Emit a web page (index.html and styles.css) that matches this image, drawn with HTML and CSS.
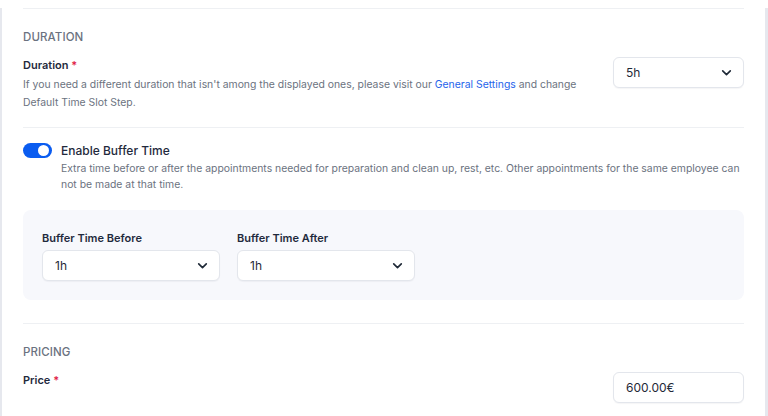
FILE: index.html
```html
<!DOCTYPE html>
<html>
<head>
<meta charset="utf-8">
<link rel="stylesheet" href="styles.css">
</head>
<body>
<div class="frame">
  <div class="content">
    <hr class="divider top">
    <section class="section">
      <h3 class="section-title">DURATION</h3>
      <div class="row">
        <div class="row-text">
          <div class="label">Duration <span class="req">*</span></div>
          <p class="desc">If you need a different duration that isn't among the displayed ones, please visit our <a class="link">General Settings</a> and change Default Time Slot Step.</p>
        </div>
        <div class="select wide"><span>5h</span><svg class="chev" viewBox="0 0 12 12"><path d="M2.5 4.5 6 8l3.5-3.5" fill="none" stroke="#1f2937" stroke-width="1.5" stroke-linecap="round" stroke-linejoin="round"/></svg></div>
      </div>
    </section>
    <hr class="divider mid">
    <div class="toggle-row">
      <div class="toggle"><div class="knob"></div></div>
      <div class="toggle-text">
        <div class="label big">Enable Buffer Time</div>
        <p class="desc">Extra time before or after the appointments needed for preparation and clean up, rest, etc. Other appointments for the same employee can not be made at that time.</p>
      </div>
    </div>
    <div class="panel">
      <div class="field">
        <div class="label">Buffer Time Before</div>
        <div class="select"><span>1h</span><svg class="chev" viewBox="0 0 12 12"><path d="M2.5 4.5 6 8l3.5-3.5" fill="none" stroke="#1f2937" stroke-width="1.5" stroke-linecap="round" stroke-linejoin="round"/></svg></div>
      </div>
      <div class="field">
        <div class="label">Buffer Time After</div>
        <div class="select"><span>1h</span><svg class="chev" viewBox="0 0 12 12"><path d="M2.5 4.5 6 8l3.5-3.5" fill="none" stroke="#1f2937" stroke-width="1.5" stroke-linecap="round" stroke-linejoin="round"/></svg></div>
      </div>
    </div>
    <hr class="divider bottom">
    <section class="section">
      <h3 class="section-title">PRICING</h3>
      <div class="row price-row">
        <div class="row-text">
          <div class="label">Price <span class="req">*</span></div>
        </div>
        <div class="input wide">600.00€</div>
      </div>
    </section>
  </div>
</div>
</body>
</html>
```

FILE: styles.css
```css
* { box-sizing: border-box; }
html, body { margin: 0; padding: 0; background: #fff; }
body {
  font-family: Inter, "Noto Sans", sans-serif;
  color: #1f2937;
  width: 768px;
  height: 416px;
  overflow: hidden;
}
.frame {
  height: 416px;
  border-left: 2px solid #e6e8ee;
  border-right: 3px solid #e6e8ee;
  padding: 0 19px 0 21px;
}
.content { width: 721px; }
.divider {
  border: 0;
  border-top: 1.5px solid #eef0f3;
  margin: 0;
}
.divider.top { margin-top: 8px; }
.section-title {
  margin: 21px 0 0;
  font-size: 11.5px;
  font-weight: 500;
  color: #6b7280;
  line-height: 14px;
  letter-spacing: 0.1px;
}
.row {
  display: flex;
  justify-content: space-between;
  align-items: flex-start;
  margin-top: 14px;
}
.label {
  font-size: 11px;
  font-weight: 600;
  color: #1f2a3d;
  line-height: 14px;
}
.label.big { font-size: 12px; font-weight: 500; line-height: 16px; }
.req { color: #e11d48; }
.desc {
  margin: 4px 0 0;
  font-size: 10.4px;
  line-height: 18px;
  color: #6b7280;
  width: 570px;
}
.link { color: #2563eb; }
.select, .input {
  display: flex;
  align-items: center;
  justify-content: space-between;
  height: 31px;
  border: 1px solid #e3e6ec;
  border-radius: 6px;
  background: #fff;
  padding: 0 10px 0 12px;
  font-size: 12px;
  color: #1f2937;
  box-shadow: 0 1px 1px rgba(16, 24, 40, 0.04);
}
.select.wide, .input.wide { width: 131px; margin-top: -1px; }
.chev { width: 13px; height: 13px; }
.divider.mid { margin-top: 15px; }
.toggle-row {
  display: flex;
  gap: 9px;
  margin-top: 15px;
}
.toggle {
  flex: none;
  width: 29px;
  height: 15px;
  border-radius: 8px;
  background: #0a5cf0;
  position: relative;
}
.knob {
  position: absolute;
  right: 3px;
  top: 2px;
  width: 11px;
  height: 11px;
  border-radius: 50%;
  background: #fff;
}
.toggle-text .desc { width: 684px; margin-top: 2px; line-height: 16px; }
.panel {
  margin-top: 17px;
  height: 90px;
  background: #f7f8fc;
  border-radius: 8px;
  padding: 21px 19px;
  display: flex;
  gap: 17px;
}
.field { width: 178px; }
.field .label { margin-bottom: 5px; }
.field .select { height: 31px; }
.divider.bottom { margin-top: 23px; }
.price-row { margin-top: 14px; }
.input { justify-content: flex-start; }
.price-row .input.wide { margin-top: -1px; }
```
